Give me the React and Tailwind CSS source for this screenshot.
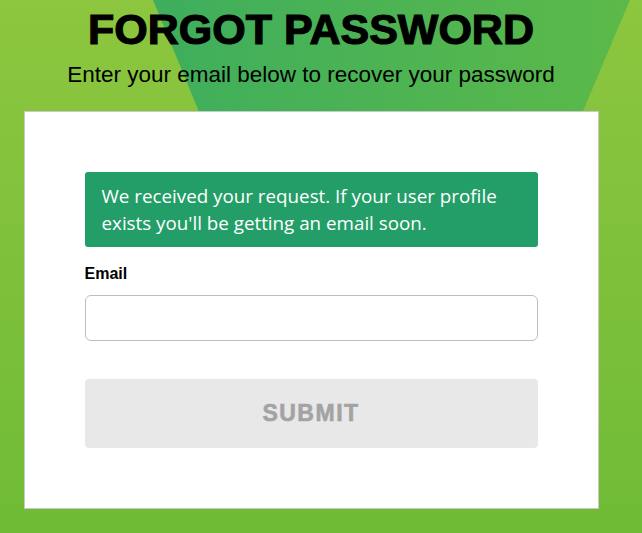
import React from 'react';

const ForgotPassword = () => {
  return (
    <div className="relative min-h-screen overflow-hidden bg-gradient-to-b from-[#8dc63f] to-[#6fbb36] font-['Liberation_Sans',Arial,sans-serif]">
      {/* background shape */}
      <svg className="absolute inset-0 h-full w-full" viewBox="0 0 642 533" preserveAspectRatio="none">
        <defs>
          <linearGradient id="band" x1="0" y1="0" x2="1" y2="0">
            <stop offset="0" stopColor="#3eae5d" />
            <stop offset="1" stopColor="#5cb949" />
          </linearGradient>
        </defs>
        <polygon points="153,0 630,0 520,260 260,260" fill="url(#band)" />
      </svg>

      <div className="relative pr-[20px]">
        <h1 className="pt-[8px] text-center text-[43px] leading-none font-black text-black [-webkit-text-stroke:1.2px_black]">
          FORGOT PASSWORD
        </h1>
        <p className="mt-[13px] text-center text-[22.5px] leading-none text-black">
          Enter your email below to recover your password
        </p>

        <div className="mx-auto mt-[24px] w-[575px] border border-[#c9c9c9] bg-white p-[60px]">
          <div className="rounded-[3px] bg-[#239e68] px-[17px] pt-[11px] pb-[10px] font-['Open_Sans',sans-serif] text-[18.8px] leading-[27px] text-white">
            We received your request. If your user profile exists you'll be getting an email soon.
          </div>

          <label className="mt-[15px] block text-[16px] leading-6 font-bold text-black">Email</label>
          <input
            type="email"
            className="mt-[9px] block h-[46px] w-full rounded-[6px] border border-[#bdbdbd] bg-white px-3 text-[16px] outline-none"
          />

          <button
            type="button"
            className="mt-[38px] flex h-[69px] w-full items-center justify-center rounded-[4px] bg-[#e8e8e8] text-[23px] font-bold tracking-[1.5px] text-[#a3a3a3] [-webkit-text-stroke:0.6px_#a3a3a3]"
          >
            SUBMIT
          </button>
        </div>
      </div>
    </div>
  );
};

export default function App() {
  return <ForgotPassword />;
}
